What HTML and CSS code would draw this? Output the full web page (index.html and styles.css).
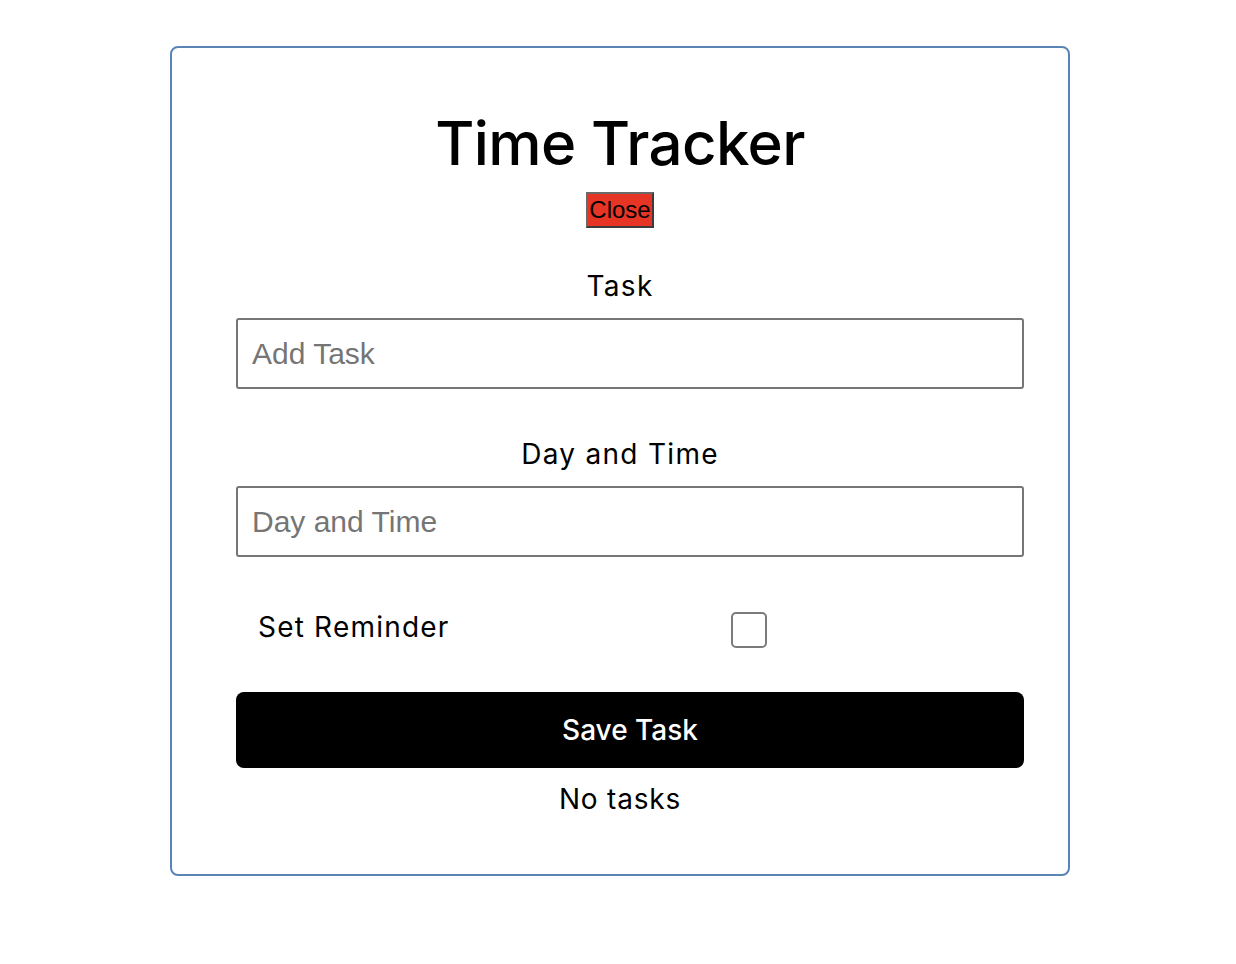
FILE: index.html
```html
<!DOCTYPE html>
<html lang="en">
<head>
<meta charset="utf-8">
<title>Time Tracker</title>
<link rel="stylesheet" href="styles.css">
</head>
<body>
  <div class="container">
    <header class="header">
      <h1 class="title">Time Tracker</h1>
      <button class="btn-close" type="button">Close</button>
    </header>
    <form class="add-form">
      <div class="form-control">
        <label class="field-label" for="task">Task</label>
        <input class="field-input" id="task" type="text" placeholder="Add Task">
      </div>
      <div class="form-control">
        <label class="field-label" for="day">Day and Time</label>
        <input class="field-input" id="day" type="text" placeholder="Day and Time">
      </div>
      <div class="form-check">
        <label class="check-label" for="reminder">Set Reminder</label>
        <input class="check-box" id="reminder" type="checkbox">
      </div>
      <button class="btn-save" type="button">Save Task</button>
    </form>
    <p class="empty">No tasks</p>
  </div>
</body>
</html>
```

FILE: styles.css
```css
* {
  box-sizing: border-box;
}

body {
  margin: 0;
  background: #ffffff;
  font-family: "Inter", "Noto Sans", sans-serif;
  color: #000000;
}

.container {
  width: 900px;
  margin: 46px 0 0 170px;
  border: 2px solid #5b84b6;
  border-radius: 8px;
  padding: 59px 0 58px;
}

.header {
  display: flex;
  flex-direction: column;
  align-items: center;
}

.title {
  margin: 0;
  font-size: 60px;
  line-height: 72px;
  font-weight: 500;
  letter-spacing: -0.6px;
}

.btn-close {
  margin-top: 13px;
  font-family: "Liberation Sans", Arial, sans-serif;
  font-size: 24px;
  line-height: 28px;
  padding: 2px 1px;
  background: #e63525;
  color: #000000;
  border: 2px solid #3c3c3c;
  border-top-color: #6a6a6a;
  border-left-color: #6a6a6a;
  border-radius: 0;
}

.add-form {
  display: flex;
  flex-direction: column;
}

.form-control {
  display: flex;
  flex-direction: column;
  align-items: center;
  margin-top: 41px;
}

.form-control + .form-control {
  margin-top: 48px;
}

.field-label {
  font-size: 28px;
  line-height: 34px;
  letter-spacing: 1.3px;
}

.field-input {
  align-self: stretch;
  margin: 15px 44px 0 64px;
  height: 71px;
  padding: 0 14px;
  border: 2px solid #767676;
  border-radius: 3px;
  font-family: "Liberation Sans", Arial, sans-serif;
  font-size: 30px;
  color: #000000;
  background: #ffffff;
}

.field-input::placeholder {
  color: #757575;
}

.form-check {
  display: flex;
  align-items: flex-start;
  margin: 53px 44px 0 64px;
  padding-left: 22px;
}

.check-label {
  font-size: 28px;
  line-height: 34px;
  letter-spacing: 1.2px;
  width: 473px;
}

.check-box {
  appearance: none;
  -webkit-appearance: none;
  margin: 2px 0 0;
  width: 36px;
  height: 36px;
  border: 2px solid #7b7b7b;
  border-radius: 5px;
  background: #ffffff;
}

.btn-save {
  margin: 44px 44px 0 64px;
  height: 76px;
  border: none;
  border-radius: 8px;
  background: #000000;
  color: #ffffff;
  font-family: "Inter", "Noto Sans", sans-serif;
  font-size: 28px;
  font-weight: 500;
}

.empty {
  margin: 14px 0 0;
  text-align: center;
  font-size: 28px;
  line-height: 34px;
  letter-spacing: 0.8px;
}
```
